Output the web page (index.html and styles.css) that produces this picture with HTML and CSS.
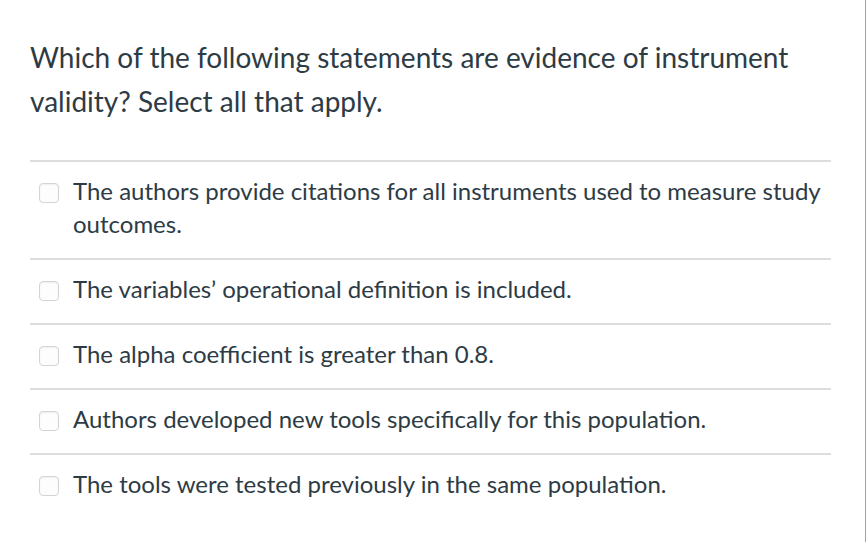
FILE: index.html
```html
<!DOCTYPE html>
<html>
<head>
<meta charset="utf-8">
<link rel="stylesheet" href="styles.css">
</head>
<body>
<div class="page">
  <div class="question">
    <p class="prompt">Which of the following statements are evidence of instrument validity? Select all that apply.</p>
    <ul class="answers">
      <li class="answer"><span class="box"></span><span class="label">The authors provide citations for all instruments used to measure study outcomes.</span></li>
      <li class="answer"><span class="box"></span><span class="label">The variables’ operational definition is included.</span></li>
      <li class="answer"><span class="box"></span><span class="label">The alpha coefficient is greater than 0.8.</span></li>
      <li class="answer"><span class="box"></span><span class="label">Authors developed new tools specifically for this population.</span></li>
      <li class="answer"><span class="box"></span><span class="label">The tools were tested previously in the same population.</span></li>
    </ul>
  </div>
</div>
</body>
</html>
```
FILE: styles.css
```css
html, body {
  margin: 0;
  padding: 0;
  background: #ffffff;
}
.page {
  height: 542px;
  box-sizing: border-box;
  border-right: 1px solid #a3a3a3;
  font-family: Lato, "Open Sans", sans-serif;
  color: #2d3b45;
  overflow: hidden;
}
.question {
  width: 801px;
  padding: 35px 0 0 30px;
}
.prompt {
  margin: 0;
  font-size: 28px;
  line-height: 44px;
  padding-bottom: 37px;
}
.answers {
  list-style: none;
  margin: 0;
  padding: 0;
}
.answer {
  display: flex;
  align-items: flex-start;
  border-top: 2px solid #dddddd;
  padding: 12px 0 18px 9px;
  font-size: 24px;
  line-height: 33px;
}
.box {
  flex: none;
  width: 18px;
  height: 18px;
  margin-top: 9px;
  margin-right: 14px;
  border: 1px solid #d4d4d4;
  border-radius: 4px;
  background: #fdfdfd;
  box-shadow: inset 0 1px 2px rgba(0,0,0,0.06);
}
.label {
  flex: 1;
}
```
